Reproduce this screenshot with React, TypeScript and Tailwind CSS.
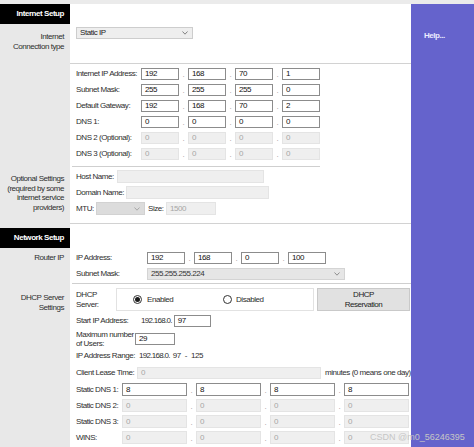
import React from "react";

const F = "font-['Liberation_Sans',Arial,sans-serif]";

function Chev({ color = "#666" }: { color?: string }) {
  return (
    <svg width="6" height="4" viewBox="0 0 6 4" className="shrink-0">
      <path d="M0.5 0.5 L3 3.2 L5.5 0.5" fill="none" stroke={color} strokeWidth="0.8" />
    </svg>
  );
}

function Field({ value, disabled, cls }: { value: string; disabled?: boolean; cls: string }) {
  return (
    <div
      className={`${cls} shrink-0 border flex items-center pl-[3px] leading-none ${
        disabled ? "bg-[#efefef] border-[#e4e4e4] text-[#a6a6a6]" : "bg-white border-[#8c8c8c] text-[#111]"
      }`}
    >
      {value}
    </div>
  );
}

function Sep({ cls }: { cls: string }) {
  return <div className={`${cls} shrink-0 flex justify-center items-end pb-[1px] text-[#9a9a9a] leading-none`}>.</div>;
}

function Quad({ values, disabled, fcls, scls }: { values: string[]; disabled?: boolean; fcls: string; scls: string }) {
  return (
    <div className="flex items-stretch">
      {values.map((v, i) => (
        <React.Fragment key={i}>
          {i > 0 && <Sep cls={scls} />}
          <Field value={v} disabled={disabled} cls={fcls} />
        </React.Fragment>
      ))}
    </div>
  );
}

function Header({ title }: { title: string }) {
  return (
    <div className="flex h-[20px]">
      <div className="w-[70px] shrink-0 bg-black text-white font-bold text-[8px] flex items-center justify-end pr-[6px] whitespace-nowrap">
        {title}
      </div>
      <div className="flex-1 bg-white" />
    </div>
  );
}

function Radio({ on }: { on?: boolean }) {
  return (
    <div className="w-[9px] h-[9px] rounded-full border border-[#333] bg-white flex items-center justify-center shrink-0">
      {on && <div className="w-[5px] h-[5px] rounded-full bg-[#1a1a1a]" />}
    </div>
  );
}

export default function App() {
  const ipF = "w-[38px] h-[12px]";
  const ipS = "w-[9px]";
  const dnsF = "w-[65px] h-[13px]";
  const dnsS = "w-[9px]";
  return (
    <div
      className={`${F} relative w-[474px] h-[447px] overflow-hidden bg-white text-[#2e2e2e] text-[8px] tracking-[-0.45px] leading-[10px]`}
    >
      <div className="h-[4px] bg-[#ebebeb]" />
      <div className="flex h-[443px]">
        <div className="w-[411px] flex flex-col">
          <Header title="Internet Setup" />

          {/* Connection type */}
          <div className="flex h-[40px]">
            <div className="w-[70px] shrink-0 bg-[#e8e8e8] pt-[8px] pr-[6px] text-right leading-[9.5px] whitespace-nowrap">
              Internet
              <br />
              Connection type
            </div>
            <div className="flex-1 bg-white border-b border-[#d2d2d2] pl-[6px] pt-[3px]">
              <div className="w-[117px] h-[12px] bg-[#eeeeee] border border-[#cdcdcd] flex items-center justify-between pl-[3px] pr-[4px] text-[#222] leading-none">
                <span>Static IP</span>
                <Chev />
              </div>
            </div>
          </div>

          {/* Static IP */}
          <div className="flex">
            <div className="w-[70px] shrink-0 bg-[#e8e8e8]" />
            <div className="flex-1 bg-white pl-[6px] pt-[4px]">
              <div className="flex flex-col gap-[4px]">
                {[
                  ["Internet IP Address:", ["192", "168", "70", "1"], false],
                  ["Subnet Mask:", ["255", "255", "255", "0"], false],
                  ["Default Gateway:", ["192", "168", "70", "2"], false],
                  ["DNS 1:", ["0", "0", "0", "0"], false],
                  ["DNS 2 (Optional):", ["0", "0", "0", "0"], true],
                  ["DNS 3 (Optional):", ["0", "0", "0", "0"], true],
                ].map(([label, vals, dis], i) => (
                  <div key={i} className="flex items-center h-[12px]">
                    <div className="w-[65px] shrink-0 whitespace-nowrap">{label as string}</div>
                    <Quad values={vals as string[]} disabled={dis as boolean} fcls={ipF} scls={ipS} />
                  </div>
                ))}
              </div>
              <div className="mt-[6px] ml-[-4px] w-[248px] h-px bg-[#cfcfcf]" />
            </div>
          </div>

          {/* Optional settings */}
          <div className="flex">
            <div className="w-[70px] shrink-0 bg-[#e8e8e8] pt-[7px] pr-[6px] text-right leading-[9.7px] whitespace-nowrap">
              Optional Settings
              <br />
              (required by some
              <br />
              internet service
              <br />
              providers)
            </div>
            <div className="flex-1 bg-white pl-[6px] pt-[3px] pb-[8px] border-b border-[#d2d2d2]">
              <div className="flex flex-col gap-[3px]">
                <div className="flex items-center h-[13px]">
                  <div className="w-[41px] shrink-0 whitespace-nowrap">Host Name:</div>
                  <Field value="" disabled cls="w-[147px] h-[13px]" />
                </div>
                <div className="flex items-center h-[13px]">
                  <div className="w-[50px] shrink-0 whitespace-nowrap">Domain Name:</div>
                  <Field value="" disabled cls="w-[143px] h-[13px]" />
                </div>
                <div className="flex items-center h-[13px]">
                  <div className="w-[20px] shrink-0">MTU:</div>
                  <div className="w-[49px] h-[13px] bg-[#dcdcdc] border border-[#d2d2d2] flex items-center justify-end pr-[4px]">
                    <Chev color="#9a9a9a" />
                  </div>
                  <div className="w-[18px] ml-[3px] shrink-0">Size:</div>
                  <Field value="1500" disabled cls="w-[50px] h-[13px]" />
                </div>
              </div>
            </div>
          </div>

          <div className="flex h-[4px]">
            <div className="w-[70px] shrink-0 bg-[#e8e8e8]" />
            <div className="flex-1 bg-white" />
          </div>

          <Header title="Network Setup" />

          {/* Router IP */}
          <div className="flex">
            <div className="w-[70px] shrink-0 bg-[#e8e8e8] pt-[5px] pr-[6px] text-right">Router IP</div>
            <div className="flex-1 bg-white pl-[6px] pt-[4px]">
              <div className="flex flex-col gap-[4px]">
                <div className="flex items-center h-[12px]">
                  <div className="w-[71px] shrink-0">IP Address:</div>
                  <Quad values={["192", "168", "0", "100"]} fcls={ipF} scls={ipS} />
                </div>
                <div className="flex items-center h-[12px]">
                  <div className="w-[71px] shrink-0">Subnet Mask:</div>
                  <div className="w-[198px] h-[12px] bg-[#e6e6e6] border border-[#d4d4d4] flex items-center justify-between pl-[3px] pr-[4px] text-[#333] leading-none">
                    <span>255.255.255.224</span>
                    <Chev color="#777" />
                  </div>
                </div>
              </div>
              <div className="mt-[3px] ml-[-4px] w-[339px] h-px bg-[#cfcfcf]" />
            </div>
          </div>

          {/* DHCP */}
          <div className="flex flex-1">
            <div className="w-[70px] shrink-0 bg-[#e8e8e8] pt-[9px] pr-[6px] text-right whitespace-nowrap">
              DHCP Server
              <br />
              Settings
            </div>
            <div className="flex-1 bg-white pl-[6px] pt-[4px]">
              <div className="flex items-center h-[23px]">
                <div className="w-[40px] shrink-0 leading-[9.5px]">
                  DHCP
                  <br />
                  Server:
                </div>
                <div className="w-[198px] h-[23px] border border-[#e2e2e2] bg-white flex items-center pl-[16px]">
                  <div className="w-[90px] flex items-center gap-[5px]">
                    <Radio on />
                    <span>Enabled</span>
                  </div>
                  <div className="flex items-center gap-[4px]">
                    <Radio />
                    <span>Disabled</span>
                  </div>
                </div>
                <div className="ml-[3px] w-[93px] h-[23px] bg-[#e1e1e1] border border-[#c9c9c9] flex flex-col items-center justify-center leading-[9.5px] text-[#222]">
                  <span>DHCP</span>
                  <span>Reservation</span>
                </div>
              </div>

              <div className="mt-[4px] flex items-center h-[12px] whitespace-nowrap">
                <div className="w-[65px] shrink-0">Start IP Address:</div>
                <div className="shrink-0 mr-[2px] tracking-[-0.7px]">192.168.0.</div>
                <Field value="97" cls="w-[37px] h-[12px]" />
              </div>

              <div className="mt-[3px] flex items-center h-[17px]">
                <div className="w-[59px] shrink-0 leading-[9px] whitespace-nowrap">
                  Maximum number
                  <br />
                  of Users:
                </div>
                <Field value="29" cls="w-[40px] h-[12px]" />
              </div>

              <div className="mt-[3px] flex items-center h-[12px] whitespace-nowrap">
                <div className="w-[63px] shrink-0">IP Address Range:</div>
                <span className="tracking-[-0.7px]">192.168.0.</span>
                <span className="ml-[3px]">97</span>
                <span className="ml-[4px]">-</span>
                <span className="ml-[4px]">125</span>
              </div>

              <div className="mt-[5px] flex items-center h-[12px]">
                <div className="w-[61px] shrink-0 whitespace-nowrap">Client Lease Time:</div>
                <Field value="0" disabled cls="w-[184px] h-[12px]" />
                <span className="ml-[4px] whitespace-nowrap">minutes (0 means one day)</span>
              </div>

              <div className="mt-[4px] flex flex-col gap-[3px]">
                {[
                  ["Static DNS 1:", ["8", "8", "8", "8"], false],
                  ["Static DNS 2:", ["0", "0", "0", "0"], true],
                  ["Static DNS 3:", ["0", "0", "0", "0"], true],
                  ["WINS:", ["0", "0", "0", "0"], true],
                ].map(([label, vals, dis], i) => (
                  <div key={i} className="flex items-center h-[13px]">
                    <div className="w-[46px] shrink-0 whitespace-nowrap">{label as string}</div>
                    <Quad values={vals as string[]} disabled={dis as boolean} fcls={dnsF} scls={dnsS} />
                  </div>
                ))}
              </div>
            </div>
          </div>
        </div>
        <div className="w-[63px] shrink-0 bg-[#6563cc] pl-[13px] pt-[27px]">
          <span className="font-bold text-[8px] text-[#ececff]">Help...</span>
        </div>
      </div>
      <div className="absolute left-[370px] top-[431px] text-[9px] leading-[12px] tracking-normal text-[#c6c6c6] whitespace-nowrap">
        CSDN @m0_56246395
      </div>
    </div>
  );
}
